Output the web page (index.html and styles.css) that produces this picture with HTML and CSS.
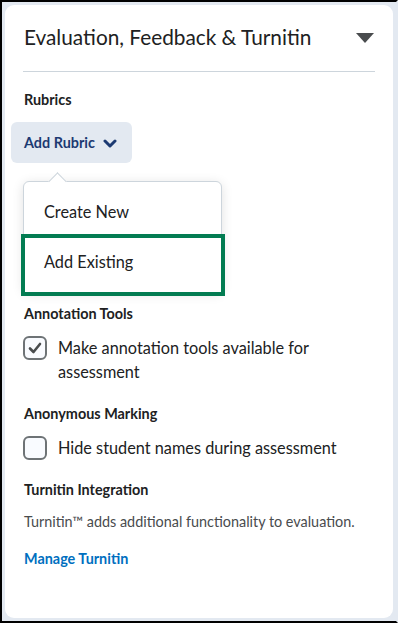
FILE: index.html
```html
<!DOCTYPE html>
<html>
<head>
<meta charset="utf-8">
<link rel="stylesheet" href="styles.css">
</head>
<body>
<div class="frame">
  <div class="card">
    <div class="header">
      <h2 class="title">Evaluation, Feedback &amp; Turnitin</h2>
      <svg class="caret" width="18" height="10" viewBox="0 0 18 10"><path d="M0 0 H18 L9 10 Z" fill="#494c4e"/></svg>
    </div>
    <div class="divider"></div>

    <div class="label first">Rubrics</div>
    <button class="btn">Add Rubric
      <svg class="chev" width="14" height="9" viewBox="0 0 14 9"><path d="M2 2 L7 7 L12 2" fill="none" stroke="#1c3a72" stroke-width="3" stroke-linecap="round" stroke-linejoin="round"/></svg>
    </button>
    <div class="menu">
      <div class="item">Create New</div>
      <div class="item focused">Add Existing</div>
    </div>

    <div class="label sec">Annotation Tools</div>
    <div class="check-row">
      <span class="box"><svg width="14" height="12" viewBox="0 0 14 12"><path d="M2 6.5 L5.5 10 L12 2" fill="none" stroke="#494c4e" stroke-width="2.6" stroke-linecap="round" stroke-linejoin="round"/></svg></span>
      <span class="check-text">Make annotation tools available for assessment</span>
    </div>

    <div class="label sec2">Anonymous Marking</div>
    <div class="check-row">
      <span class="box"></span>
      <span class="check-text">Hide student names during assessment</span>
    </div>

    <div class="label sec2">Turnitin Integration</div>
    <p class="desc">Turnitin™ adds additional functionality to evaluation.</p>
    <a class="link" href="#">Manage Turnitin</a>
  </div>
</div>
</body>
</html>
```

FILE: styles.css
```css
html, body {
  margin: 0;
  padding: 0;
}
body {
  width: 398px;
  height: 623px;
  font-family: Lato, "Noto Sans", sans-serif;
  color: #202122;
}
.frame {
  width: 398px;
  height: 623px;
  box-sizing: border-box;
  border: 2px solid #000;
  border-right: 2px solid #e3e9f1;
  background: #e3e9f1;
  padding: 3px 3px 3px 3px;
}
.card {
  background: #fff;
  height: 100%;
  box-sizing: border-box;
  border-radius: 9px;
  padding: 18px 18px 0 19px;
}
.header {
  display: flex;
  align-items: center;
  justify-content: space-between;
  padding-right: 1px;
}
.title {
  margin: 0;
  font-size: 20.8px;
  line-height: 28px;
  font-weight: 400;
  color: #202122;
}
.caret {
  display: block;
  margin-top: 2px;
}
.divider {
  height: 1px;
  background: #cdd5dc;
  margin: 20px 0 0 -1px;
}
.label {
  font-size: 14.4px;
  line-height: 20px;
  font-weight: 700;
  color: #202122;
}
.label.first { margin-top: 18px; }
.btn {
  display: flex;
  align-items: center;
  gap: 8px;
  margin: 12px 0 0 -13px;
  height: 41px;
  padding: 0 15px 0 13px;
  border: none;
  border-radius: 6px;
  background: #e3e9f1;
  font-family: Lato, "Noto Sans", sans-serif;
  font-size: 14.4px;
  font-weight: 700;
  color: #1c3a72;
}
.chev { display: block; margin-top: 1px; }
.menu {
  position: relative;
  margin: 18px 0 0 -1px;
  width: 199px;
  box-sizing: border-box;
  border: 1px solid #cdd5dc;
  border-radius: 6px;
  background: #fff;
  box-shadow: 0 2px 12px rgba(0, 0, 0, 0.12);
}
.menu::before {
  content: "";
  position: absolute;
  left: 27px;
  top: -7px;
  width: 12px;
  height: 12px;
  background: #fff;
  border-left: 1px solid #cdd5dc;
  border-top: 1px solid #cdd5dc;
  transform: rotate(45deg);
}
.item {
  position: relative;
  font-size: 16.3px;
  line-height: 24px;
  color: #202122;
  padding: 18px 20px 10px 20px;
}
.item.focused {
  border: 4px solid #037c52;
  margin: 0 -4px -5px -3px;
  padding: 12px 20px 18px 19px;
  background: #fff;
}
.label.sec { margin-top: 12px; }
.label.sec2 { margin-top: 20px; }
.check-row {
  display: flex;
  align-items: flex-start;
  gap: 11px;
  margin-top: 12px;
  margin-left: -1px;
}
.box {
  flex: none;
  width: 24px;
  height: 24px;
  box-sizing: border-box;
  border: 2px solid #6e7376;
  border-radius: 6px;
  background: #f9fbff;
  display: flex;
  align-items: center;
  justify-content: center;
}
.box svg { display: block; }
.check-text {
  font-size: 16.3px;
  line-height: 24px;
  color: #202122;
}
.desc {
  margin: 12px 0 0 0;
  font-size: 14.4px;
  line-height: 20px;
  color: #494c4e;
}
.link {
  display: block;
  margin-top: 17px;
  font-size: 14.4px;
  line-height: 20px;
  font-weight: 700;
  color: #006fbf;
  text-decoration: none;
}
```
